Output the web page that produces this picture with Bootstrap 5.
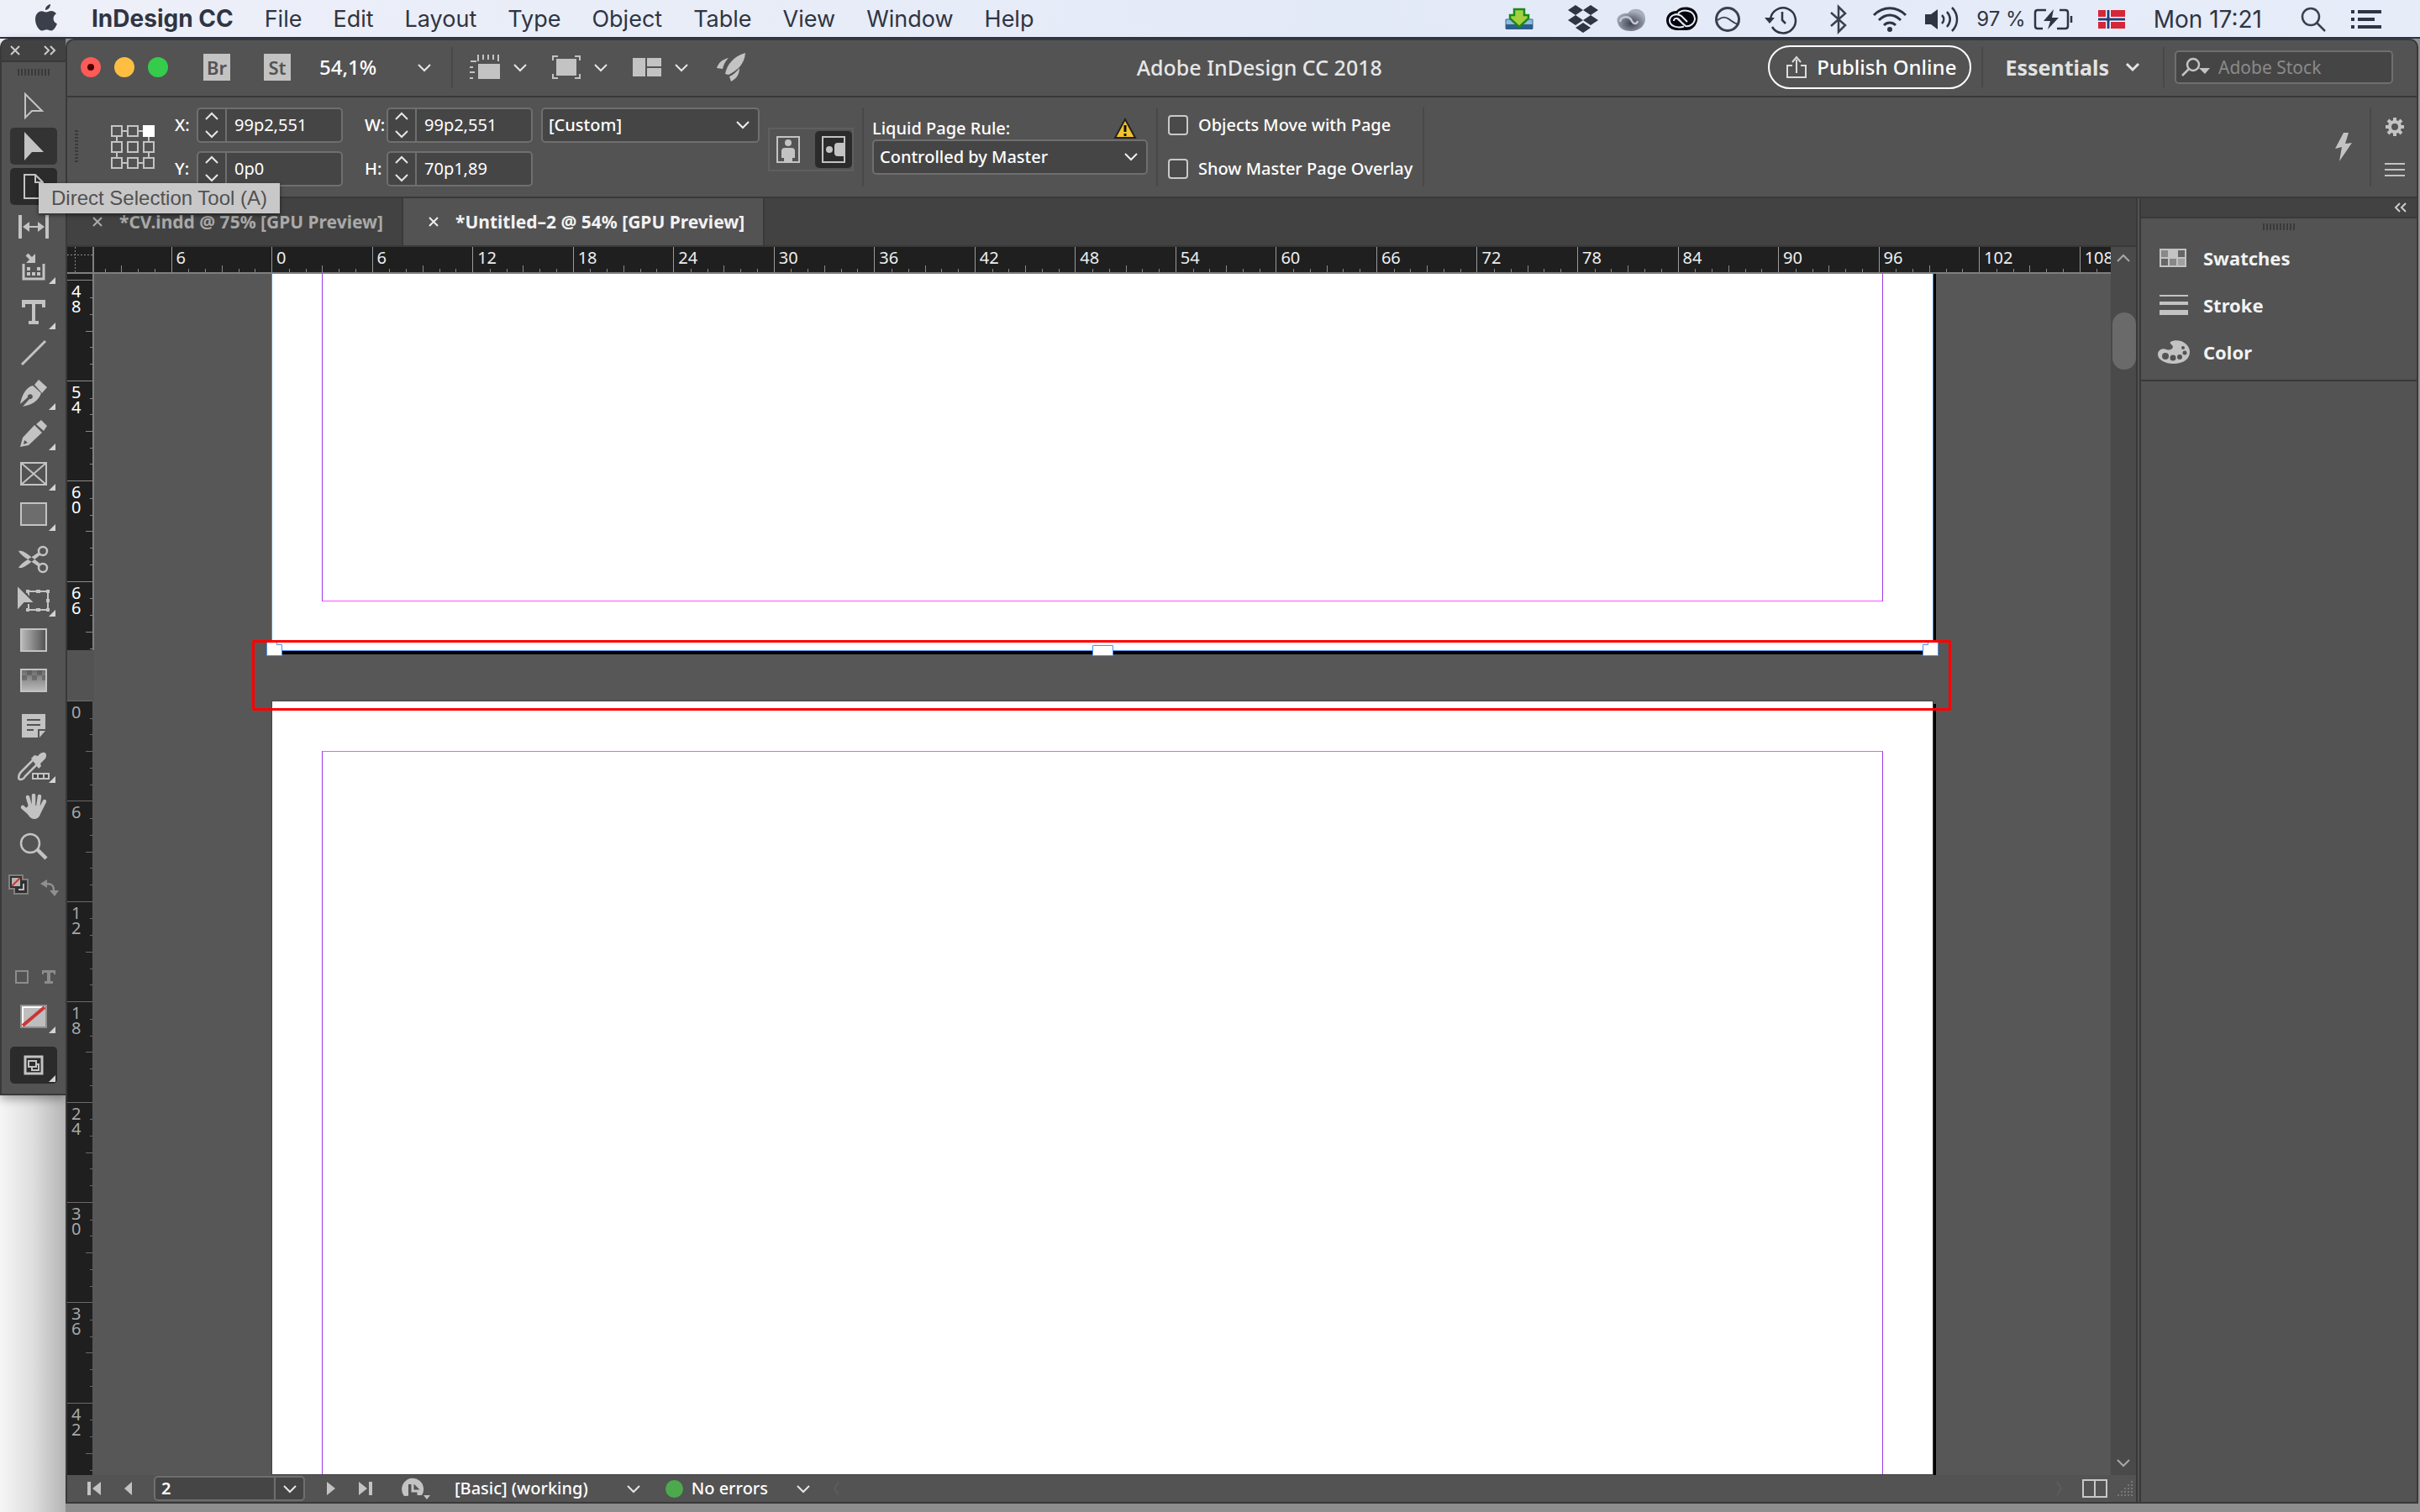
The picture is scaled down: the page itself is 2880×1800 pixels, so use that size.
<!DOCTYPE html>
<html lang="en">
<head>
<meta charset="utf-8">
<meta name="viewport" content="width=device-width, initial-scale=1">
<title>Adobe InDesign CC 2018</title>
<link href="https://cdn.jsdelivr.net/npm/bootstrap@5.3.0/dist/css/bootstrap.min.css" rel="stylesheet">
<script src="https://cdn.jsdelivr.net/npm/bootstrap@5.3.0/dist/js/bootstrap.bundle.min.js"></script>
<style>
:root{--panel:#535353;--dark:#424242;--edge:#393939;--ico:#c3c3c3;--field:#454545;--line:#6f6f6f;--ruler:#1f1f1f}
body{font-family:"Noto Sans","Open Sans",sans-serif;font-size:20px;line-height:28px;color:#fff;background:#8e8e8e;overflow:hidden}
svg{display:block;flex:none;overflow:visible}
button,input,select{font:inherit;color:inherit}
.bare{background:none;border:0;padding:0;display:flex;align-items:center;justify-content:center}
.chev{fill:none;stroke:#e6e6e6;stroke-width:2}
.mid{font-weight:500}
.min-0{min-width:0;min-height:0}
/* spacing steps before an item in a bar */
.s10{margin-left:10px}.s12{margin-left:12px}.s16{margin-left:16px}.s20{margin-left:20px}.s24{margin-left:24px}.s26{margin-left:26px}
.s28{margin-left:28px}.s30{margin-left:30px}.s34{margin-left:34px}.s40{margin-left:40px}.s42{margin-left:42px}.s46{margin-left:46px}
.g10{gap:10px}.g16{gap:16px}.g20{gap:20px}.g30{gap:30px}.g40{gap:40px}
/* system menu bar */
.sysbar{height:46px;background:linear-gradient(90deg,#eef0f9,#e3eaf7 55%,#e6ecf8);border-bottom:2px solid #2c3344;color:#2f3542;font-family:Inter,"Noto Sans",sans-serif;font-size:27px;line-height:40px;padding:1px 46px 0 42px}
.sysbar a{color:inherit;text-decoration:none}
.sysmenu{gap:37px;margin-left:41px}
.sysmenu .fw-bold,.clock{font-size:28px}
.charge{font-size:24px}
/* tools */
.toolcol{width:78px;background:linear-gradient(90deg,#f6f6f6,#dedede 50%,#b4b4b4)}
.toolbox{background:var(--panel);border:2px solid var(--edge);border-right:0;border-top-left-radius:10px;box-shadow:0 4px 12px rgba(0,0,0,.35);padding-bottom:10px}
.toolhead{height:26px;background:var(--dark);border-bottom:2px solid var(--edge);border-top-left-radius:8px;padding:0 12px 0 10px}
.grip{width:38px;height:8px;background:repeating-linear-gradient(90deg,#3a3a3a 0 2px,transparent 2px 4px)}
.toolbox .grip{margin:8px auto 12px}
.tool{width:60px;height:48px;margin-left:8px;position:relative}
.tool.chosen::before{content:"";position:absolute;inset:2px;border-radius:5px;background:#333}
.tool.chosen.deep::before{background:#2b2b2b}
.tool svg{position:relative}
.tool.more::after{content:"";position:absolute;right:4px;bottom:4px;border-left:8px solid transparent;border-bottom:8px solid #d4d4d4}
.toolset{padding-bottom:6px}
.toolpair{height:30px;padding-left:8px;gap:14px}
.toolpair.low{height:24px;padding-left:16px;gap:16px;margin:83px 0 11px}
.lasttool{margin-top:10px}
.hint{position:absolute;left:46px;top:218px;height:36px;padding:0 15px;background:#c8c8c8;color:#515151;font:24px/36px "Liberation Sans",Arial,sans-serif;box-shadow:0 2px 5px rgba(0,0,0,.5);z-index:20;white-space:nowrap}
/* app frame */
.frame{border:2px solid var(--edge);border-radius:10px 10px 0 0;background:var(--panel);margin-right:2px;margin-bottom:10px;overflow:hidden}
.titlebar{height:68px;border-bottom:2px solid var(--edge);padding:0 28px 2px 16px}
.light{width:24px;height:24px;border-radius:50%}
.light.red{background:#fc5b57}.light.amber{background:#fdbe41}.light.green{background:#35cb4b}
.apptile{width:32px;height:32px;background:var(--ico);color:#535353;font-weight:600;font-size:22px;line-height:32px}
.zoomlevel{font-size:24px;gap:49px}
.rule{width:2px;background:#484848;align-self:stretch}
.apptitle{font-size:25px;padding-left:6px;color:#e6e6e6}
.publish{height:52px;border:2px solid #fff;border-radius:26px;padding:0 16px 0 20px;font-size:24px;gap:12px}
.workspace{font-size:25px;color:#e2e2e2}
.stock{width:260px;height:40px;border:2px solid var(--line);border-radius:5px;background:var(--field);padding:0 6px}
.stock input{background:none;border:0;outline:0;width:200px;padding:0 0 0 10px;font-size:21px}
.stock input::placeholder{color:#8a8a8a;opacity:1}
.ctrlbar{height:120px;border-bottom:2px solid var(--edge);padding:12px 14px 12px 8px}
.ctrlbar>.refpoint{margin-left:38px}
.num{width:174px;height:42px;border:2px solid var(--line);border-radius:5px;background:var(--field);overflow:hidden}
.num .bare{width:34px;border-right:2px solid var(--line)}
.num input{background:none;border:0;outline:0;width:130px;padding:0 0 0 9px}
.lab{width:26px}
.pick{height:42px;border:2px solid var(--line);border-radius:5px;color:#fff;font-size:20px;line-height:28px;padding:0 40px 0 7px;background-color:var(--field);background-size:16px 10px;background-position:right 10px center;--bs-form-select-bg-img:url("data:image/svg+xml,%3csvg xmlns='http://www.w3.org/2000/svg' viewBox='0 0 16 10'%3e%3cpath fill='none' stroke='%23eee' stroke-width='2' d='M1 1l7 7 7-7'/%3e%3c/svg%3e")}
.pagesize{width:260px}
.orient{border:2px solid #5f5f5f;width:102px;height:52px;margin-top:6px}
.orient .bare{width:44px;height:44px;border-radius:5px}
.orient .on{background:#2b2b2b}
.liquid{width:328px;line-height:26px;padding-bottom:2px}
.liquid>div{padding-right:14px}
.tick{width:24px;height:24px;margin:0;border:2px solid #c9c9c9;border-radius:4px!important;background:#4a4a4a}
.checks{gap:24px}
.barends{gap:32px}
/* document */
.tabs{height:58px;background:var(--dark);border-bottom:2px solid var(--edge)}
.doctab{border-right:2px solid var(--edge);font-weight:700;font-size:21px;color:#a9a9a9;gap:20px;padding:0 22px 0 30px}
.doctab.on{background:var(--panel);color:#f2f2f2}
.hruler{height:32px;background:var(--ruler);border-bottom:2px solid #7f7f7f}
.corner{width:32px;border-right:2px solid #7f7f7f}
.htrack{width:2510px;margin-left:-28px}
.hcell{flex:1 1 0;border-left:1px solid #9a9a9a;position:relative;line-height:26px;padding-left:5px;color:#eee}
.hcell b,.vcell b{position:absolute;background:#8a8a8a}
.hcell b{bottom:0;width:1px;height:4px}.hcell b.m{height:8px}
.vrulers{width:32px}
.vruler{background:var(--ruler);border-right:2px solid #7f7f7f;overflow:hidden}
.vruler.dim{border-right-color:#575757;color:#a8a8a8}
.vtrack{margin-top:-112px;height:597px}
.dim .vtrack{margin-top:0;height:955px}
.vcell{flex:1 1 0;border-top:1px solid #8a8a8a;position:relative;line-height:18px;padding:4px 0 0 5px;width:30px;word-break:break-all}
.vcell span{display:block;width:12px}
.vcell b{right:0;height:1px;width:3px}.vcell b.m{width:8px}
.dim .vcell{border-color:#6a6a6a}.dim .vcell b{background:#6a6a6a}
.upper{height:448px}
.gapband{height:60px}
.canvas{background:#575757;padding-left:211px;overflow:hidden;position:relative}
.sheet{width:1978px;background:#fff;border:1px solid #4a90f0;box-shadow:3px 4px 0 #000}
.sheet.one{height:455px;margin-top:-6px;padding:0 59px 58px}
.sheet.two{border-color:#444;margin-top:59px;padding:59px 59px 0}
.guide{border:1px solid #9a3be8;border-bottom-color:#ff50ff}
.two .guide{border-top-color:#ff50ff;border-bottom:0}
.callout{position:absolute;left:188px;top:436px;width:2022px;height:84px;border:3px solid #f00;border-radius:2px}
.grab{position:absolute;top:438px;fill:#fff;stroke:#4a90f0}
.grab.west{left:205px}.grab.south{left:1188px;top:442px}.grab.east{left:2176px}
.scroll{width:30px;background:#4a4a4a;padding:9px 0 10px}
.scroll svg{fill:none;stroke:#a8a8a8;stroke-width:2}
.thumb{width:28px;height:68px;border-radius:14px;background:#6a6a6a;margin:61px 0 0 2px}
.statusbar{height:32px;padding:0 4px 0 24px}
.pagebox{width:180px;height:30px;border:2px solid var(--line);border-radius:5px;background:var(--field);overflow:hidden}
.pagebox input{background:none;border:0;outline:0;width:141px;padding:0 0 0 7px;font-weight:600}
.pagebox .bare{width:36px;border-left:2px solid var(--line)}
/* dock */
.divide{width:4px;border-left:2px solid var(--edge);background:var(--panel)}
.dock{width:330px;border-left:2px solid var(--edge)}
.dockhead{height:24px;background:var(--dark);border-bottom:2px solid var(--edge);padding-right:12px}
.docklist{border-bottom:2px solid var(--edge);height:194px;padding-top:6px}
.docklist .grip{margin-bottom:5px}
.dockitem{height:56px;padding-left:20px;font-weight:700;font-size:22px;color:#f2f2f2;background:none;border:0}
.dockitem svg{width:38px;margin-right:16px}
</style>
</head>
<body>
<div class="vh-100 d-flex flex-column">
<nav class="sysbar d-flex align-items-center flex-shrink-0" aria-label="System menu">
  <svg width="26" height="32" viewBox="0 0 26 32" fill="#3a3f4b" class="mb-1"><path d="M18 0c.3 3-2.500 7-6 7C11.600 4 14.600.500 18 0zM13 9.500c1.500 0 3.500-1.500 6-1.500 2.500 0 4.700 1.300 6 3.200-5 3-4.300 10 .9 12.100C24.500 27 22 31.500 19 31.500c-2.200 0-3-1.300-5.500-1.300s-3.500 1.300-5.500 1.300C4 31.500 0 24 0 18 0 12 3.700 8.200 7.500 8.200c2.300 0 4 1.300 5.500 1.300z"/></svg>
  <div class="sysmenu d-flex align-items-baseline"><a href="#" class="fw-bold">InDesign CC</a><a href="#">File</a><a href="#">Edit</a><a href="#">Layout</a><a href="#">Type</a><a href="#">Object</a><a href="#">Table</a><a href="#">View</a><a href="#">Window</a><a href="#">Help</a></div>
  <div class="d-flex align-items-center ms-auto">
    <svg width="34" height="28" viewBox="0 0 34 28"><path d="M1 14h32v11H1z" fill="#8dbbe0" stroke="#3a668f"/><path d="M1 20h32v6H1z" fill="#2e5d8a"/><path d="M11 2h12v7h5v4L17 23 6 13V9h5z" fill="#a5cf3c" stroke="#178a1e" stroke-width="2.500"/></svg>
    <svg class="s40" width="38" height="33" viewBox="0 0 38 33" fill="#2f3542"><path d="M10 0l9 6-9 6-9-6zM28 0l9 6-9 6-9-6zM10 12l9 6-9 6-9-6zM28 12l9 6-9 6-9-6zM19 21l9 6-9 6-9-6z"/></svg>
    <svg class="s20" width="36" height="28" viewBox="0 0 36 28"><defs><radialGradient id="cg" cx=".5" cy=".65" r=".55"><stop stop-color="#3f4450"/><stop offset=".6" stop-color="#7b808c"/><stop offset="1" stop-color="#a9aebb"/></radialGradient></defs><path d="M2 18C-1 10 8 6 14 7c5-8 20-7 21 5 1 9-7 16-17 16C10 28 4 25 2 18z" fill="url(#cg)"/><path d="M5 17c1-7 11-8 14-1 2 4 6 4 7 0" fill="none" stroke="#c3c8d4" stroke-width="2.500"/></svg>
    <svg class="s24" width="38" height="27" viewBox="0 0 38 27"><path d="M12 4C17-2 30-2 35 5c6 8 0 22-11 22H12C-4 26-4 4 12 4z" fill="#05050f"/><g fill="none" stroke="#e8edf8" stroke-width="2"><path d="M21 22.500C13 25 4 22 4 15.500S12 6 18 10l7 7M14 7C20 1 33 3 34 13c0 6-6 10-11 9L13 13M9 16c0-4 5-4 7-1l4 5"/></g></svg>
    <svg class="s20" width="31" height="30" viewBox="0 0 31 30" fill="none" stroke="#3a404d" stroke-width="3"><circle cx="15" cy="15" r="13.500"/><path d="M3 16c6-5 10-4 14-1s6 5 11 6" stroke-width="2"/></svg>
    <svg class="s28" width="38" height="32" viewBox="0 0 38 32" fill="none" stroke="#2f3542" stroke-width="2.500"><path d="M7 16A15 15 0 1 1 9 25"/><path d="M21 7v10l4 4"/><path d="M0 14h12l-6 7z" fill="#2f3542" stroke="none"/></svg>
    <svg class="s40" width="20" height="32" viewBox="0 0 20 32" fill="none" stroke="#3a404d" stroke-width="2.500"><path d="M1 8l17 15-8 8V1l8 8L1 24"/></svg>
    <svg class="s30" width="42" height="30" viewBox="0 0 42 30" fill="none" stroke="#2f3542" stroke-width="3"><path d="M2 10c11-11 27-11 38 0M8 16c8-8 18-8 26 0M14 22c4-4 10-4 14 0"/><circle cx="21" cy="27" r="1.500" fill="#2f3542"/></svg>
    <svg class="s20" width="42" height="30" viewBox="0 0 42 30" fill="none" stroke="#2f3542" stroke-width="2.500"><path d="M1 9h7l8-6v24l-8-6H1z" fill="#2f3542" stroke="none"/><path d="M21 10c3 3 3 7 0 10M27 6c5 6 5 12 0 18M33 1c8 8 8 20 0 28"/></svg>
    <span class="charge s20">97 %</span>
    <svg class="s10" width="46" height="24" viewBox="0 0 46 24" fill="none" stroke="#2f3542" stroke-width="2.500"><path d="M14 1H4Q1 1 1 4v16q0 3 3 3h6M30 1h7q3 0 3 3v16q0 3-3 3H27"/><path d="M44 8v8"/><path d="M23 0L11 14h8l-3 10 13-14h-8z" fill="#2f3542" stroke="none"/></svg>
    <svg class="s30" width="32" height="22" viewBox="0 0 32 22"><path fill="#d72638" d="M0 0h32v22H0z"/><path stroke="#fff" stroke-width="6" d="M12 0v22M0 11h32"/><path stroke="#20407f" stroke-width="3" d="M12 0v22M0 11h32"/></svg>
    <span class="clock s34">Mon 17:21</span>
    <svg class="s46" width="30" height="30" viewBox="0 0 30 30" fill="none" stroke="#3a404d" stroke-width="2.500"><circle cx="12" cy="12" r="10"/><path d="M19 19l10 10"/></svg>
    <svg class="s30" width="36" height="22" viewBox="0 0 36 22" stroke="#2f3542" stroke-width="4"><path d="M0 2h4M8 2h28M0 11h4M8 11h20M0 20h4M8 20h28"/></svg>
  </div>
</nav>

<div class="d-flex flex-grow-1 min-0">
<div class="toolcol flex-shrink-0">
<aside class="toolbox" aria-label="Tools">
  <div class="toolhead d-flex align-items-center justify-content-between">
    <button class="bare" aria-label="Close"><svg width="12" height="12" stroke="#ccc" stroke-width="2"><path d="M1 1l10 10M11 1L1 11"/></svg></button>
    <button class="bare" aria-label="Expand"><svg width="14" height="10" fill="none" stroke="#ccc" stroke-width="2"><path d="M1 0l5 5-5 5M8 0l5 5-5 5"/></svg></button>
  </div>
  <div class="grip"></div>
  <div class="toolset">
    <button class="bare tool" aria-label="Selection"><svg width="22" height="34" fill="none" stroke="#c3c3c3" stroke-width="2"><path d="M1 3v28l8-8h12z"/></svg></button>
    <button class="bare tool chosen" aria-label="Direct Selection"><svg width="22" height="34" fill="#c3c3c3"><path d="M0 0v34l9-10h14z"/></svg></button>
    <button class="bare tool chosen deep" aria-label="Page"><svg width="24" height="30" fill="none" stroke="#c3c3c3" stroke-width="2"><path d="M1 1h13l9 9v19H1zM14 1v9h9"/></svg></button>
    <button class="bare tool" aria-label="Gap"><svg width="36" height="28" stroke="#c3c3c3" fill="#c3c3c3"><path d="M2 0v28M34 0v28" stroke-width="4"/><path d="M10 14h16" stroke-width="2"/><path d="M5 14l8-6v12zM31 14l-8-6v12z" stroke="none"/></svg></button>
    <button class="bare tool more" aria-label="Content Collector"><svg width="28" height="32" fill="none" stroke="#c3c3c3" stroke-width="3"><path d="M2 12v18h24V12"/><path d="M6 1l6 6" stroke-width="4"/><path d="M16 0v11H5z" fill="#c3c3c3" stroke="none"/><path d="M6 18h4M18 18h4M6 24h4M12 24h4M18 24h4" stroke-width="4"/></svg></button>
  </div>
  <div class="toolset">
    <button class="bare tool more" aria-label="Type"><svg width="28" height="30" fill="#c3c3c3"><path d="M0 0h28v9h-4V5h-8v20h4v4H8v-4h4V5H4v4H0z"/></svg></button>
    <button class="bare tool" aria-label="Line"><svg width="28" height="28" stroke="#c3c3c3" stroke-width="3"><path d="M0 28L28 0"/></svg></button>
    <button class="bare tool more" aria-label="Pen"><svg width="32" height="32" fill="#c3c3c3"><path d="M22 0l10 9-6 7L17 6zM15 7l10 9c-3 9-11 14-22 16l8-9a3 3 0 1 0-2-2L0 29C2 18 7 9 15 7z"/></svg></button>
    <button class="bare tool more" aria-label="Pencil"><svg width="32" height="32" fill="#c3c3c3"><path d="M25 0l7 7-4 6-9-8zM17 6l9 9L10 30 0 32l3-11zM5 24l-1 5 5-2z" fill-rule="evenodd"/></svg></button>
    <button class="bare tool more" aria-label="Rectangle Frame"><svg width="32" height="28" fill="none" stroke="#c3c3c3" stroke-width="2"><path d="M1 1h30v26H1zM1 1l30 26M31 1L1 27"/></svg></button>
    <button class="bare tool more" aria-label="Rectangle"><svg width="32" height="28" fill="#6d6d6d" stroke="#c3c3c3" stroke-width="2"><path d="M1 1h30v26H1z"/></svg></button>
  </div>
  <div class="toolset">
    <button class="bare tool" aria-label="Scissors"><svg width="36" height="32" fill="none" stroke="#c3c3c3" stroke-width="2.500"><circle cx="29" cy="6" r="5"/><circle cx="29" cy="26" r="5"/><path d="M0 6c6-1 10 3 27 16l-4 2C14 17 4 13 0 6zM0 26c6 1 10-3 27-16l-4-2C14 15 4 19 0 26z" fill="#c3c3c3" stroke="none"/></svg></button>
    <button class="bare tool more" aria-label="Free Transform"><svg width="38" height="32" fill="none" stroke="#c3c3c3" stroke-width="2"><path d="M13 6h23v22H13z"/><path d="M10 6h4M22 6h5M34 6h4M34 17h4M10 28h4M22 28h5M34 28h4" stroke-width="4"/><path d="M-1-2v32l9-10h13z" fill="#c3c3c3" stroke="#535353"/></svg></button>
    <button class="bare tool" aria-label="Gradient Swatch"><svg width="32" height="28"><defs><linearGradient id="g1"><stop stop-color="#bbb"/><stop offset="1" stop-color="#505050"/></linearGradient></defs><path d="M1 1h30v26H1z" fill="url(#g1)" stroke="#c3c3c3" stroke-width="2"/></svg></button>
    <button class="bare tool" aria-label="Gradient Feather"><svg width="32" height="28"><defs><linearGradient id="g2" x2="0" y2="1"><stop stop-color="#6a6a6a"/><stop offset="1" stop-color="#bbb"/></linearGradient></defs><path d="M1 1h30v26H1z" fill="url(#g2)" stroke="#c3c3c3" stroke-width="2"/><path d="M8 2h6v6H8zM20 2h6v6h-6zM2 8h6v6H2zM14 8h6v6h-6zM26 8h4v6h-4z" fill="#444" opacity=".4"/></svg></button>
  </div>
  <div class="toolset">
    <button class="bare tool" aria-label="Note"><svg width="28" height="28"><path d="M0 0h28v18h-9v10H0zM21 28v-8h7z" fill="#c3c3c3"/><path d="M6 7h16M6 13h16M6 19h8" stroke="#535353" stroke-width="2"/></svg></button>
    <button class="bare tool more" aria-label="Eyedropper"><svg width="38" height="34" fill="none" stroke="#c3c3c3" stroke-width="2.500"><path d="M18 10L4 24c-3 3-4 9-1 9s5-2 6-4l14-14"/><path d="M16 8l4-4 4 1c5-7 13-5 9 3l-6 6 1 3-3 3z" fill="#c3c3c3" stroke="none"/><path d="M18 26h19v6H18z" fill="#444" stroke-width="2"/><path d="M24 26v6M31 26v6" stroke-width="2"/></svg></button>
    <button class="bare tool" aria-label="Hand"><svg width="32" height="32" fill="none" stroke="#c3c3c3" stroke-linecap="round" stroke-width="4.500"><path d="M9 5l4 14M16 3v14M23 4l-2 14M29 10l-6 12M3 17l8 7"/><path d="M10 15h13l3 4c-2 8-4 12-9 12-6 0-8-6-11-12z" fill="#c3c3c3" stroke="none"/></svg></button>
    <button class="bare tool" aria-label="Zoom"><svg width="32" height="32" fill="none" stroke="#c3c3c3"><circle cx="12" cy="12" r="11" stroke-width="2.500"/><path d="M20 19l11 11" stroke-width="4.500"/></svg></button>
  </div>
  <div class="toolpair d-flex align-items-center">
    <button class="bare" aria-label="Default Fill and Stroke"><svg width="24" height="24"><path d="M1 1h16v5h6v17H7v-6H1z" fill="#303030" stroke="#808080" stroke-width="2"/><path d="M4 4h10v10H4z" fill="#b5b5b5"/><path d="M4 14L14 4" stroke="#c33" stroke-width="2"/><path d="M12 18h6v-7" fill="none" stroke="#bbb" stroke-width="2"/></svg></button>
    <button class="bare mt-2" aria-label="Swap"><svg width="22" height="20" fill="none" stroke="#8f8f8f" stroke-width="2.500"><path d="M6 5c8 0 10 2 10 9"/><path d="M8 0v10L0 5zM11 13h11l-5 7z" fill="#8f8f8f" stroke="none"/></svg></button>
  </div>
  <div class="toolpair low d-flex align-items-center">
    <button class="bare" aria-label="Formatting affects container"><svg width="16" height="16" fill="none" stroke="#8c8c8c" stroke-width="2"><path d="M1 1h14v14H1z"/></svg></button>
    <button class="bare" aria-label="Formatting affects text"><svg width="16" height="16" fill="#8c8c8c"><path d="M0 0h16v5h-2V3h-4v10h3v3H3v-3h3V3H2v2H0z"/></svg></button>
  </div>
  <button class="bare tool more" aria-label="Apply None"><svg width="32" height="28"><path d="M1 1h30v26H1z" fill="#bebebe" stroke="#8f8f8f" stroke-width="2"/><path d="M3 26V3h26" stroke="#fff" fill="none" stroke-width="2"/><path d="M3 25L29 3" stroke="#cc3535" stroke-width="4"/></svg></button>
  <button class="bare tool chosen deep more lasttool" aria-label="Screen Mode"><svg width="22" height="22" fill="none" stroke="#c3c3c3" stroke-width="2"><path d="M1 1h20v20H1z" stroke-width="3"/><path d="M5 6h9v7H5z"/><path d="M9 13v4h8v-7h-3"/></svg></button>
</aside>
</div>

<main class="frame flex-grow-1 d-flex flex-column min-0">
<header class="titlebar d-flex align-items-center flex-shrink-0">
  <div class="d-flex g16"><span class="light red"><svg width="24" height="24"><circle cx="12" cy="12" r="4" fill="#4d0000"/></svg></span><span class="light amber"></span><span class="light green"></span></div>
  <div class="d-flex text-center g40 s42"><button class="bare apptile">Br</button><button class="bare apptile">St</button></div>
  <div class="d-flex align-items-center zoomlevel s34"><span class="mid">54,1%</span><button class="bare" aria-label="Zoom level"><svg class="chev" width="16" height="9"><path d="M1 1l7 7 7-7"/></svg></button></div>
  <span class="rule my-2 s24"></span>
  <div class="d-flex align-items-center s20 g30">
    <button class="bare g16" aria-label="View options"><svg width="36" height="30" fill="none" stroke="#c3c3c3" stroke-width="2"><path d="M10 11h26v18H10z" fill="#c3c3c3" stroke="none"/><path d="M8 8H1M10 0v8M16 0v6M22 0v6M28 0v6M34 0v8M0 15h4M0 21h6M0 28h4"/></svg><svg class="chev" width="16" height="9"><path d="M1 1l7 7 7-7"/></svg></button>
    <button class="bare g16" aria-label="Screen mode"><svg width="34" height="28" fill="none" stroke="#c3c3c3" stroke-width="2"><path d="M5 4h24v20H5z" fill="#c3c3c3" stroke="none"/><path d="M1 6V1h6M27 1h6v5M33 22v5h-6M7 27H1v-5"/></svg><svg class="chev" width="16" height="9"><path d="M1 1l7 7 7-7"/></svg></button>
    <button class="bare g16" aria-label="Arrange documents"><svg width="34" height="22" fill="#c3c3c3"><path d="M0 0h15v22H0zM17 0h17v10H17zM17 12h17v10H17z"/></svg><svg class="chev" width="16" height="9"><path d="M1 1l7 7 7-7"/></svg></button>
  </div>
  <button class="bare s34" aria-label="GPU performance"><svg width="34" height="34" fill="#c3c3c3"><path d="M34 0C20 4 12 14 10 25l4 1C24 21 33 14 34 0zM14 6C6 8 2 12 0 18l7 1c1-5 3-9 7-13zM27 18c-3 4-7 8-12 10l2 6c6-3 10-8 10-16z"/></svg></button>
  <h1 class="mx-auto mb-0 mid apptitle">Adobe InDesign CC 2018</h1>
  <button class="bare publish mid"><svg width="24" height="26" fill="none" stroke="#ddd" stroke-width="2"><path d="M7 11H1v14h22V11h-6M12 20V4M7 7l5-6 5 6"/></svg>Publish Online</button>
  <span class="rule my-2 s12"></span>
  <button class="bare fw-bold workspace s26 g20">Essentials <svg class="chev" width="16" height="10"><path d="M1 1l7 7 7-7" stroke-width="3"/></svg></button>
  <span class="rule my-2 s28"></span>
  <div class="stock d-flex align-items-center s12"><svg width="34" height="22" fill="none" stroke="#c3c3c3" stroke-width="2.500"><circle cx="14" cy="8" r="7"/><path d="M9 13L1 21"/><path d="M21 12h13l-6 7z" fill="#c3c3c3" stroke="none"/></svg><input type="search" aria-label="Search Adobe Stock" placeholder="Adobe Stock"></div>
</header>

<section class="ctrlbar d-flex align-items-center flex-shrink-0">
  <svg width="6" height="40"><path d="M3 0v40" stroke="#3a3a3a" stroke-width="4" stroke-dasharray="2 2"/></svg>
  <svg class="refpoint" width="52" height="52" fill="none" stroke="#c3c3c3" stroke-width="2"><path d="M1 1h12v12H1zM20 1h12v12H20zM1 20h12v12H1zM20 20h12v12H20zM39 20h12v12H39zM1 39h12v12H1zM20 39h12v12H20zM39 39h12v12H39zM13 7h7M32 7h7M13 45h7M32 45h7M7 13v7M45 13v7M7 32v7M45 32v7"/><path d="M38 0h14v14H38z" fill="#fff" stroke="none"/></svg>
  <div class="d-flex flex-column g10 s24">
    <div class="d-flex align-items-center"><label class="lab mid" for="fx">X:</label><div class="num d-flex"><button class="bare" aria-label="Step X"><svg class="chev" width="16" height="30"><path d="M1 8l7-7 7 7M1 22l7 7 7-7"/></svg></button><input id="fx" value="99p2,551"></div></div>
    <div class="d-flex align-items-center"><label class="lab mid" for="fy">Y:</label><div class="num d-flex"><button class="bare" aria-label="Step Y"><svg class="chev" width="16" height="30"><path d="M1 8l7-7 7 7M1 22l7 7 7-7"/></svg></button><input id="fy" value="0p0"></div></div>
  </div>
  <div class="d-flex flex-column g10 s26">
    <div class="d-flex align-items-center"><label class="lab mid" for="fw">W:</label><div class="num d-flex"><button class="bare" aria-label="Step W"><svg class="chev" width="16" height="30"><path d="M1 8l7-7 7 7M1 22l7 7 7-7"/></svg></button><input id="fw" value="99p2,551"></div></div>
    <div class="d-flex align-items-center"><label class="lab mid" for="fh">H:</label><div class="num d-flex"><button class="bare" aria-label="Step H"><svg class="chev" width="16" height="30"><path d="M1 8l7-7 7 7M1 22l7 7 7-7"/></svg></button><input id="fh" value="70p1,89"></div></div>
  </div>
  <select class="form-select pick pagesize mid align-self-start s10" aria-label="Page size"><option>[Custom]</option></select>
  <div class="orient d-flex align-items-center justify-content-between s10">
    <button class="bare" aria-label="Portrait"><svg width="28" height="32" fill="#c3c3c3"><path d="M1 1h26v30H1z" fill="none" stroke="#c3c3c3" stroke-width="2"/><circle cx="14" cy="8" r="4"/><path d="M6 18q0-4 4-4h8q4 0 4 4v8h-3v6H9v-6H6z"/></svg></button>
    <button class="bare on" aria-label="Landscape"><svg width="28" height="32" fill="#c3c3c3"><path d="M1 1h26v30H1z" fill="none" stroke="#c3c3c3" stroke-width="2"/><circle cx="9" cy="16" r="4"/><path d="M27 8h-8q-4 0-4 4v8q0 4 4 4h8z"/></svg></button>
  </div>
  <span class="rule s10"></span>
  <div class="liquid s10">
    <div class="d-flex justify-content-between align-items-center"><label class="mid" for="rule">Liquid Page Rule:</label><svg width="26" height="26"><path d="M13 2l12 22H1z" fill="#f2c32e" stroke="#222" stroke-width="2"/><path d="M13 9v8M13 19v3" stroke="#111" stroke-width="3"/></svg></div>
    <select id="rule" class="form-select pick mid"><option>Controlled by Master</option></select>
  </div>
  <span class="rule s10"></span>
  <div class="d-flex flex-column checks s12">
    <div class="d-flex align-items-center"><input class="form-check-input tick" type="checkbox" id="c1"><label class="mid s12" for="c1">Objects Move with Page</label></div>
    <div class="d-flex align-items-center"><input class="form-check-input tick" type="checkbox" id="c2"><label class="mid s12" for="c2">Show Master Page Overlay</label></div>
  </div>
  <span class="rule s12"></span>
  <button class="bare ms-auto" aria-label="Quick Apply"><svg width="22" height="34" fill="#c3c3c3"><path d="M11 0L1 19l8-2-3 17L21 12l-8 1 4-13z"/></svg></button>
  <span class="rule s20"></span>
  <div class="d-flex flex-column align-items-center barends s16">
    <button class="bare" aria-label="Settings"><svg width="22" height="22" fill="none" stroke="#c3c3c3"><circle cx="11" cy="11" r="6" stroke-width="4"/><path d="M11 0v4M11 18v4M0 11h4M18 11h4M3 3l3 3M16 16l3 3M19 3l-3 3M6 16l-3 3" stroke-width="4"/></svg></button>
    <button class="bare" aria-label="Panel menu"><svg width="24" height="16" stroke="#c3c3c3" stroke-width="2"><path d="M0 1h24M0 8h24M0 15h24"/></svg></button>
  </div>
</section>

<div class="d-flex flex-grow-1 min-0">
<section class="flex-grow-1 d-flex flex-column min-0">
  <div class="tabs d-flex flex-shrink-0">
    <div class="doctab d-flex align-items-center"><button class="bare" aria-label="Close CV.indd"><svg width="12" height="12" stroke="#aaa" stroke-width="2"><path d="M1 1l10 10M11 1L1 11"/></svg></button>*CV.indd @ 75% [GPU Preview]</div>
    <div class="doctab on d-flex align-items-center"><button class="bare" aria-label="Close Untitled-2"><svg width="12" height="12" stroke="#eee" stroke-width="2"><path d="M1 1l10 10M11 1L1 11"/></svg></button>*Untitled–2 @ 54% [GPU Preview]</div>
  </div>
  <div class="d-flex flex-grow-1 min-0">
    <div class="flex-grow-1 d-flex flex-column min-0">
      <div class="hruler d-flex flex-shrink-0">
        <div class="corner flex-shrink-0"><svg width="30" height="30" stroke="#8a8a8a" stroke-dasharray="2 2"><path d="M0 9.500h30M9.500 0v30"/></svg></div>
        <div class="flex-grow-1 overflow-hidden"><div class="htrack d-flex h-100" id="hr"></div></div>
      </div>
      <div class="d-flex flex-grow-1 min-0">
        <div class="vrulers d-flex flex-column flex-shrink-0">
          <div class="vruler upper flex-shrink-0"><div class="vtrack d-flex flex-column" id="v1"></div></div>
          <div class="gapband flex-shrink-0"></div>
          <div class="vruler dim flex-grow-1 min-0"><div class="vtrack d-flex flex-column" id="v2"></div></div>
        </div>
        <div class="canvas flex-grow-1 d-flex flex-column min-0">
          <div class="sheet one d-flex flex-shrink-0"><div class="guide flex-grow-1"></div></div>
          <div class="sheet two d-flex flex-grow-1"><div class="guide flex-grow-1"></div></div>
          <svg class="grab west" width="19" height="17"><path d="M.5.500h12v3h6v13H.5z"/></svg>
          <svg class="grab south" width="25" height="13"><path d="M.5.500h24v12H.5z"/></svg>
          <svg class="grab east" width="19" height="17"><path d="M6.500.500h12v16H.5v-13h6z"/></svg>
          <div class="callout"></div>
        </div>
      </div>
    </div>
    <div class="scroll d-flex flex-column">
      <button class="bare" aria-label="Scroll up"><svg width="16" height="8"><path d="M1 8l7-7 7 7"/></svg></button>
      <div class="thumb"></div>
      <button class="bare mt-auto" aria-label="Scroll down"><svg width="16" height="8"><path d="M1 0l7 7 7-7"/></svg></button>
    </div>
  </div>
  <footer class="statusbar d-flex align-items-center flex-shrink-0">
    <button class="bare" aria-label="First page"><svg width="16" height="16" fill="#c3c3c3"><path d="M0 0h4v16H0zM16 0v16L6 8z"/></svg></button>
    <button class="bare s28" aria-label="Previous page"><svg width="9" height="16" fill="#c3c3c3"><path d="M9 0v16L0 8z"/></svg></button>
    <div class="pagebox d-flex s26"><input value="2" aria-label="Page"><button class="bare" aria-label="Page list"><svg class="chev" width="16" height="9"><path d="M1 1l7 7 7-7"/></svg></button></div>
    <button class="bare s26" aria-label="Next page"><svg width="10" height="16" fill="#c3c3c3"><path d="M0 0v16l10-8z"/></svg></button>
    <button class="bare s28" aria-label="Last page"><svg width="16" height="16" fill="#c3c3c3"><path d="M12 0h4v16h-4zM0 0v16l10-8z"/></svg></button>
    <button class="bare s34" aria-label="Open"><svg width="34" height="26"><path d="M4 22A13 13 0 1 1 25 21" fill="#c3c3c3"/><path d="M9 24V8h7l6 6v10z" fill="#535353"/><path d="M14 8v8h7v5" fill="none" stroke="#c3c3c3" stroke-width="3"/><path d="M27 21h8l-4 5z" fill="#c3c3c3"/></svg></button>
    <span class="mid s30">[Basic] (working)</span>
    <button class="bare s46" aria-label="Preflight profile"><svg class="chev" width="16" height="9"><path d="M1 1l7 7 7-7"/></svg></button>
    <svg class="s30" width="21" height="21"><circle cx="10.500" cy="10.500" r="10.500" fill="#4caa4c"/></svg>
    <span class="mid s10">No errors</span>
    <button class="bare s34" aria-label="Preflight menu"><svg class="chev" width="16" height="9"><path d="M1 1l7 7 7-7"/></svg></button>
    <svg class="s28" width="7" height="16" fill="none" stroke="#5c5c5c" stroke-width="2"><path d="M6 0L1 8l5 8"/></svg>
    <svg class="ms-auto" width="7" height="16" fill="none" stroke="#5c5c5c" stroke-width="2"><path d="M1 0l5 8-5 8"/></svg>
    <button class="bare s24" aria-label="Split layout"><svg width="30" height="22" fill="none" stroke="#c8c8c8" stroke-width="2"><path d="M1 1h28v20H1zM15 1v20"/></svg></button>
    <svg class="s12" width="18" height="18" fill="#777"><path d="M0 16h2v2H0zM4 16h2v2H4zM8 16h2v2H8zM12 16h2v2h-2zM16 16h2v2h-2zM4 12h2v2H4zM8 12h2v2H8zM12 12h2v2h-2zM16 12h2v2h-2zM8 8h2v2H8zM12 8h2v2h-2zM16 8h2v2h-2zM12 4h2v2h-2zM16 4h2v2h-2zM16 0h2v2h-2z"/></svg>
  </footer>
</section>
<div class="divide flex-shrink-0"></div>
<aside class="dock flex-shrink-0" aria-label="Panels">
  <div class="dockhead d-flex align-items-center justify-content-end"><button class="bare" aria-label="Expand panels"><svg width="14" height="10" fill="none" stroke="#ccc" stroke-width="2"><path d="M6 0L1 5l5 5M13 0L8 5l5 5"/></svg></button></div>
  <div class="docklist">
    <div class="grip mx-auto"></div>
    <div class="d-flex flex-column">
      <button class="dockitem d-flex align-items-center"><svg width="38" height="22"><path d="M2 0h32v22H2z" fill="#c3c3c3"/><path d="M4 2h8v8H4zM14 12h8v8h-8z" fill="#888"/><path d="M24 2h8v8h-8zM4 12h8v8H4z" fill="#666"/><path d="M24 12h8v8h-8z" fill="#a0a0a0"/></svg>Swatches</button>
      <button class="dockitem d-flex align-items-center"><svg width="38" height="24" fill="#c3c3c3"><path d="M2 0h34v2H2zM2 8h34v4H2zM2 18h34v6H2z"/></svg>Stroke</button>
      <button class="dockitem d-flex align-items-center"><svg width="38" height="28"><path d="M15 2c10-5 23 2 23 12 0 9-9 14-19 14C8 28 0 23 0 17c0-6 6-8 10-6 5 2 10-2 7-5-2-2-3-3-2-4z" fill="#c3c3c3"/><g fill="#535353"><circle cx="9" cy="19" r="4"/><circle cx="18" cy="21" r="3.500"/><circle cx="26" cy="20" r="3"/><circle cx="32" cy="15" r="2.500"/><circle cx="30" cy="9" r="2"/></g></svg>Color</button>
    </div>
  </div>
</aside>
</div>
</main>
</div>
</div>
<div class="hint" role="tooltip">Direct Selection Tool (A)</div>
<script>
// Builds one ruler: a cell for each major unit, with six subdivisions in each.
function ruler(id, kind, labels) {
  const side = kind === 'hcell' ? 'left' : 'top';
  document.getElementById(id).innerHTML = labels.map(n => {
    let t = '';
    for (let i = 1; i < 6; i++) t += `<b class="${i === 3 ? 'm' : ''}" style="${side}:${i * 100 / 6}%"></b>`;
    return `<div class="${kind}"><span>${n}</span>${t}</div>`;
  }).join('');
}
const seq = (from, to) => { const r = []; for (let v = from; v <= to; v += 6) r.push(v); return r; };
ruler('hr', 'hcell', ['', 6, ...seq(0, 108)]);
ruler('v1', 'vcell', ['', 48, 54, 60, 66]);
ruler('v2', 'vcell', seq(0, 42));
</script>
</body>
</html>
